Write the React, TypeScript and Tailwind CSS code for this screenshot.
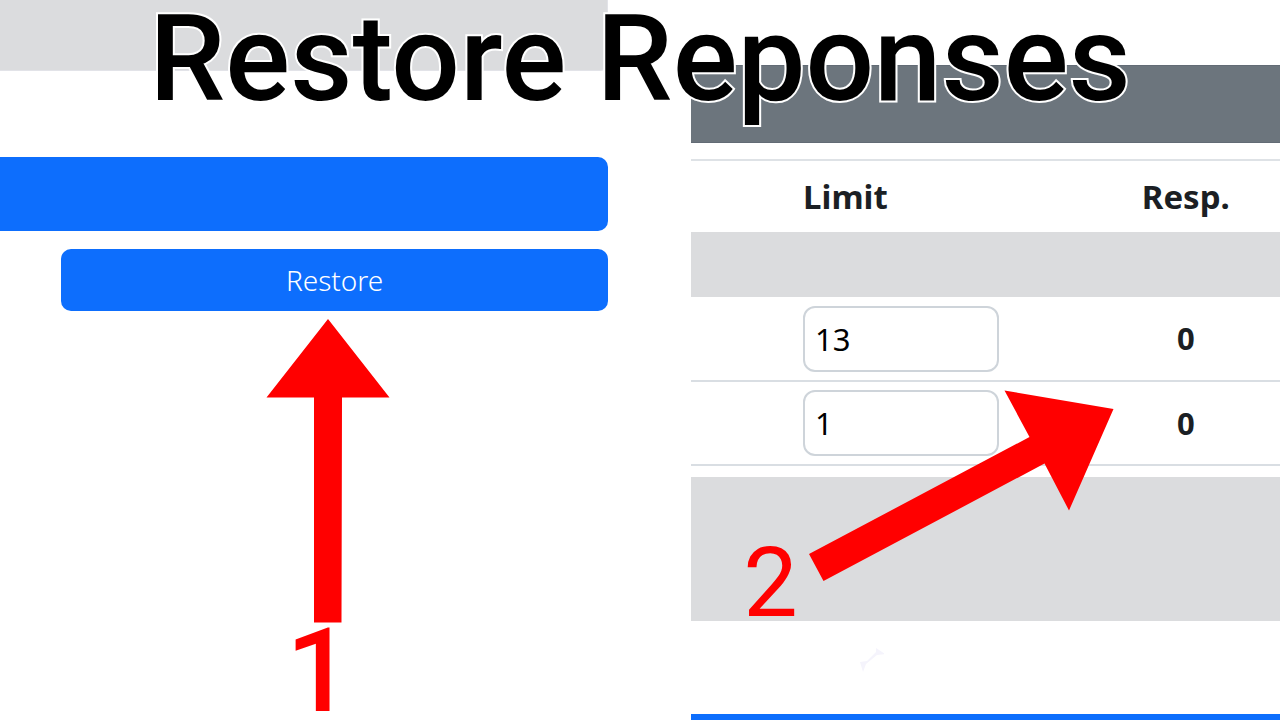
import React, { useState } from "react";

type RowType = {
      id: string;
      limit: string;
      responses: number;
};

const initialRows: RowType[] = [
      { id: "limit-first", limit: "13", responses: 0 },
      { id: "limit-second", limit: "1", responses: 0 },
];

const Title = () => {
      return (
            <h1 className="absolute inset-x-0 top-0 z-20 text-center whitespace-nowrap font-['Roboto',sans-serif] font-medium text-[121px] leading-[118px] text-black [-webkit-text-stroke:4px_white] [paint-order:stroke_fill] pointer-events-none">
                  Restore Reponses
            </h1>
      );
};

const RestorePanel = () => {
      return (
            <section className="flex-1 flex flex-col pr-[83px]">
                  <div className="h-[71px] bg-[#dbdcde] border-b border-r border-[#e2e3e8] rounded-br-lg" />
                  <div className="h-[74px] mt-[86px] bg-[#0d6efd] rounded-r-[10px]" />
                  <button
                        type="button"
                        className="h-[62px] mt-[18px] ml-[61px] bg-[#0d6efd] rounded-[10px] text-white text-[28px] font-light cursor-pointer"
                  >
                        Restore
                  </button>
                  <div className="flex flex-col items-start mt-2">
                        <svg
                              viewBox="0 0 124 304"
                              className="w-[124px] h-[304px] ml-[266px]"
                              fill="#ff0000"
                              aria-hidden="true"
                        >
                              <path d="M62 0 L123.500 78.500 H76 L75.500 303.500 H48 V78.500 H0.500 Z" />
                        </svg>
                        <p className="ml-[286px] font-['Roboto',sans-serif] font-medium text-[116px] leading-[97px] text-[#ff0000]">
                              1
                        </p>
                  </div>
            </section>
      );
};

const ResponsesPanel = () => {
      const [rows, setRows] = useState<RowType[]>(initialRows);

      const changeLimit = (id: string, limit: string) => {
            setRows(rows.map((row) => (row.id === id ? { ...row, limit } : row)));
      };

      return (
            <section className="relative w-[46%] flex flex-col">
                  <div className="h-[78px] mt-[65px] bg-[#6c757d] border-y border-[#626b75]" />
                  <table className="w-full mt-4 table-fixed border-collapse">
                        <thead>
                              <tr className="h-[72px] border-t-2 border-[#dee2e6] text-[33px] leading-10 text-[#1b1f24]">
                                    <td className="w-[19%]" />
                                    <th scope="col" className="w-[49%] text-left font-bold">
                                          Limit
                                    </th>
                                    <th scope="col" className="w-[32%] text-center font-bold">
                                          Resp.
                                    </th>
                              </tr>
                        </thead>
                        <tbody>
                              <tr className="h-[65px] bg-[#dbdcde]">
                                    <td colSpan={3} />
                              </tr>
                              {rows.map((row) => (
                                    <tr key={row.id} className="h-[84px] border-b-2 border-[#d9dee3]">
                                          <td />
                                          <td>
                                                <input
                                                      id={row.id}
                                                      type="text"
                                                      aria-label="Limit"
                                                      value={row.limit}
                                                      onChange={(e) => changeLimit(row.id, e.target.value)}
                                                      className="block w-[196px] h-[66px] px-[10px] bg-white border-2 border-[#ced4da] rounded-xl text-[31px] text-black outline-none"
                                                />
                                          </td>
                                          <td className="text-center text-[31px] font-bold text-[#1b1f24]">
                                                {row.responses}
                                          </td>
                                    </tr>
                              ))}
                        </tbody>
                  </table>
                  <div className="h-[144px] mt-[11px] pl-[52px] flex items-end bg-[#dbdcde]">
                        <p className="font-['Roboto',sans-serif] text-[97px] leading-[76px] text-[#ff0000]">2</p>
                  </div>
                  <div className="flex-1 mt-[93px] bg-[#0d6efd]" />

                  {/* Arrow pointing at the response counts */}
                  <svg
                        viewBox="0 0 306 192"
                        className="absolute left-[118px] top-[390px] w-[306px] h-[192px] pointer-events-none"
                        fill="#ff0000"
                        aria-hidden="true"
                  >
                        <path d="M195.500 0.500 L304.500 19 L260 120.500 L235.500 73.500 L14.500 191 L0 164 L220.500 47 Z" />
                  </svg>
                  <svg
                        viewBox="0 0 24 24"
                        className="absolute left-[169px] top-[648px] w-6 h-6 pointer-events-none"
                        fill="#f5f4fc"
                        aria-hidden="true"
                  >
                        <path d="M0 14 L7 13 L16 4 V0 L25 6 L17 7 L6 16 L3 24 Z" />
                  </svg>
            </section>
      );
};

export default function App() {
      return (
            <main className="relative min-h-screen flex overflow-hidden bg-white font-['Noto_Sans',sans-serif]">
                  <Title />
                  <RestorePanel />
                  <ResponsesPanel />
            </main>
      );
}
